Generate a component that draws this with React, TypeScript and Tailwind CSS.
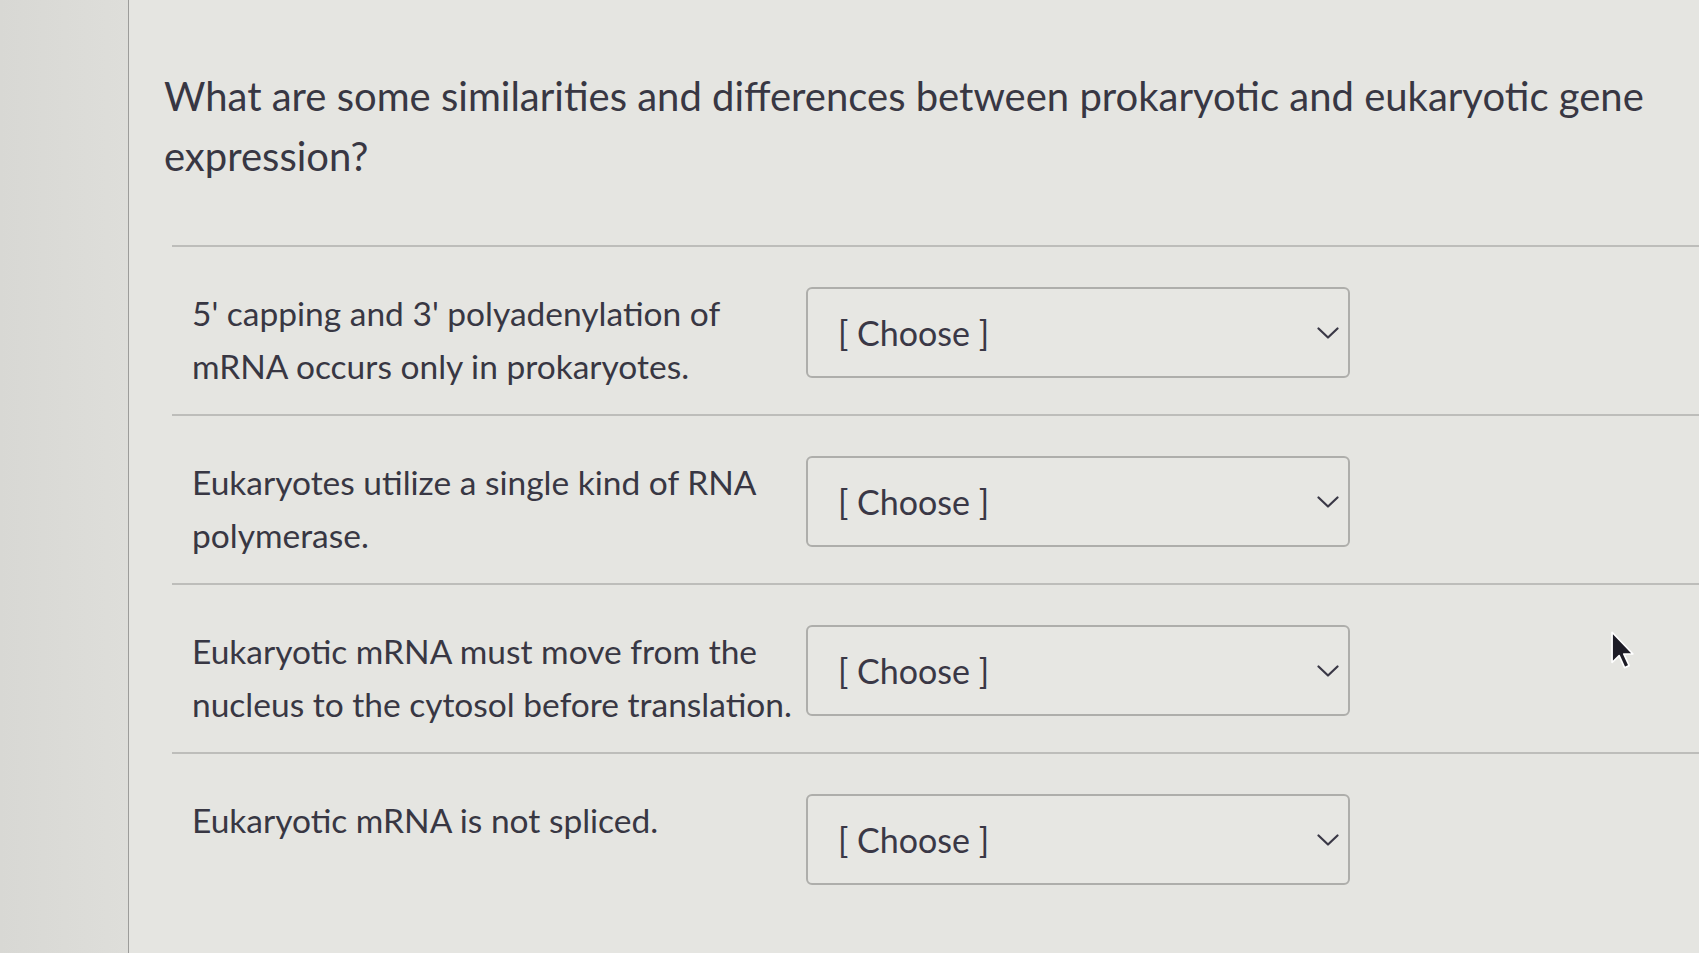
import React from 'react';

const rows: ReadonlyArray<string> = [
  "5' capping and 3' polyadenylation of mRNA occurs only in prokaryotes.",
  'Eukaryotes utilize a single kind of RNA polymerase.',
  'Eukaryotic mRNA must move from the nucleus to the cytosol before translation.',
  'Eukaryotic mRNA is not spliced.',
];

function ChooseSelect(): JSX.Element {
  return (
    <div className="flex h-[91px] w-[544px] shrink-0 items-center justify-between rounded-[6px] border-2 border-[#aeaeab] bg-[#e7e7e3] pl-[30px] pr-[9px]">
      <span className="text-[34px] leading-none text-[#3a3846]">[ Choose ]</span>
      <svg width="22" height="12" viewBox="0 0 22 12" fill="none">
        <polyline
          points="1.5,1.5 11,10.5 20.5,1.5"
          stroke="#3a3846"
          strokeWidth="2.2"
          strokeLinecap="round"
          strokeLinejoin="round"
        />
      </svg>
    </div>
  );
}

export default function App(): JSX.Element {
  return (
    <div
      className="relative flex h-[953px] w-full overflow-hidden bg-[#e5e5e1] text-[#383743]"
      style={{ fontFamily: 'Lato, "Open Sans", sans-serif' }}
    >
      <div className="w-[129px] shrink-0 border-r-[1.5px] border-[#9c9c9a] bg-gradient-to-r from-[#d8d8d4] to-[#dededa]" />
      <main className="flex flex-1 flex-col">
        <h1 className="pl-[35px] pr-[16px] pt-[66px] text-[40px] leading-[60px]">
          What are some similarities and differences between prokaryotic and eukaryotic gene
          expression?
        </h1>
        <ul className="ml-[43px] mt-[59px] flex flex-col">
          {rows.map((text, index) => (
            <li
              key={text}
              className={`flex h-[169px] items-start gap-[2px] border-t-2 border-[#bdbdba] pl-[20px] pt-[40px] ${
                index === rows.length - 1 ? 'flex-1' : ''
              }`}
            >
              <p className="w-[612px] shrink-0 text-[33.5px] leading-[53px]">{text}</p>
              <ChooseSelect />
            </li>
          ))}
        </ul>
      </main>
      <svg
        className="absolute left-[1610px] top-[630px]"
        width="25"
        height="40"
        viewBox="0 0 12 19"
      >
        <path
          d="M1 1 L1 15.5 L4.4 12.2 L7 18 L9.2 17 L6.6 11.4 L11 11.4 Z"
          fill="#1d1c26"
          stroke="#ffffff"
          strokeWidth="0.8"
          strokeLinejoin="round"
        />
      </svg>
    </div>
  );
}
